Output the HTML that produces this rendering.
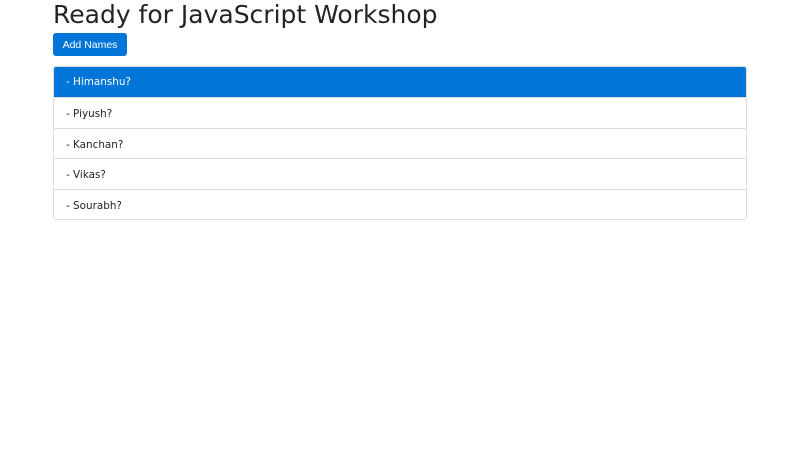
<!DOCTYPE html>
<html><head><style>
body{margin:0;background:#fff;font-family:"DejaVu Sans",sans-serif;color:#212529}
h1{position:absolute;left:53px;top:-3px;margin:0;font-weight:400;font-size:25px;line-height:36px;white-space:nowrap}
.btn{position:absolute;left:53px;top:33px;width:74px;height:23px;background:#0275d8;color:#fff;border-radius:3px;font:10.5px "Liberation Sans",sans-serif;line-height:24px;text-align:center}
.list{position:absolute;left:53px;top:66px;width:694px;border:1px solid #ddd;border-radius:3px;box-sizing:border-box;overflow:hidden}
.item{height:30.6px;line-height:33px;padding-left:12px;font-size:10.4px;border-top:1px solid #ddd;box-sizing:border-box}
.item:first-child{border-top:none;background:#0275d8;color:#fff;height:31px;margin:-1px -1px 0 -1px;padding-left:13px}
</style></head><body>
<h1>Ready for JavaScript Workshop</h1>
<div class="btn">Add Names</div>
<div class="list">
<div class="item">- Himanshu?</div>
<div class="item">- Piyush?</div>
<div class="item">- Kanchan?</div>
<div class="item">- Vikas?</div>
<div class="item">- Sourabh?</div>
</div>
</body></html>
